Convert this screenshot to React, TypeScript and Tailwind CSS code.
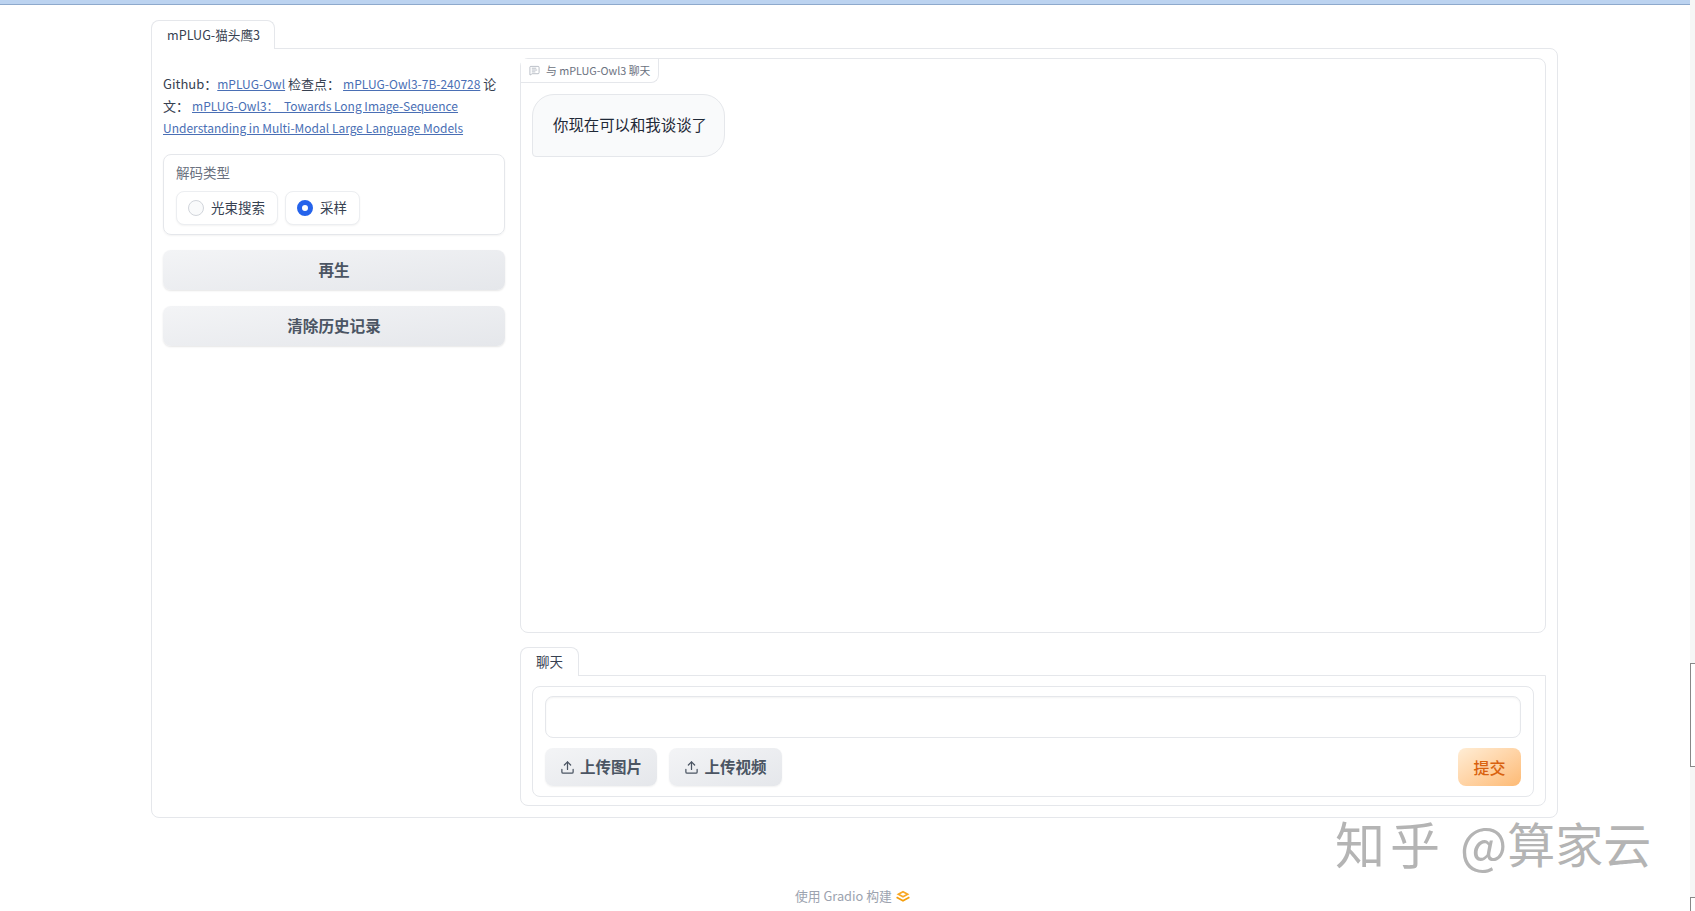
import { MessageSquareText, Upload } from "lucide-react"

const font = "font-['Noto_Sans_CJK_SC','Noto_Sans',sans-serif]"

function GradioLogo() {
  return (
    <svg viewBox="0 0 24 20" className="w-[14px] h-[12px]" fill="none">
      <path d="M12 1 L23 7 L12 13 L1 7 Z" fill="#f9a825" />
      <path d="M1 12 L12 18 L23 12" stroke="#f59e0b" strokeWidth="3" />
      <path d="M7 7 L12 4.5 L17 7 L12 9.5 Z" fill="#fff" />
    </svg>
  )
}

function Radio({ label, checked }: { label: string; checked?: boolean }) {
  return (
    <div className={`flex items-center gap-[7px] h-[34px] pl-[11px] rounded-lg border border-[#eceef1] bg-white shadow-[0_1px_2px_rgba(0,0,0,0.05)] ${checked ? "w-[75px]" : "w-[102px]"}`}>
      {checked ? (
        <span className="shrink-0 w-4 h-4 rounded-full border-[5px] border-[#2563eb] bg-white" />
      ) : (
        <span className="shrink-0 w-4 h-4 rounded-full border border-[#d1d5db] bg-[#f9fafb]" />
      )}
      <span className="whitespace-nowrap text-[13.5px] leading-none text-[#374151]">{label}</span>
    </div>
  )
}

function UploadButton({ label, width }: { label: string; width: string }) {
  return (
    <button className={`flex items-center justify-center gap-[5px] h-[38px] rounded-lg bg-gradient-to-br from-[#f3f4f6] to-[#e5e7eb] shadow-[0_1px_2px_rgba(0,0,0,0.06)] text-[15.5px] font-semibold text-[#4b5563] ${width}`}>
      <Upload className="w-[15px] h-[15px]" strokeWidth={2} />
      {label}
    </button>
  )
}

export default function App() {
  return (
    <div className={`relative h-[911px] w-[1695px] overflow-hidden bg-white ${font}`}>
      {/* browser edge */}
      <div className="h-[5px] bg-[#bcd3f0] border-b border-[#8ea9cc]" />

      <main className="ml-[151px] mt-[15px] w-[1407px]">
        <div className="flex">
          <div className="flex items-center h-[29px] w-[124px] pl-[15px] -mb-px rounded-t-lg border border-b-0 border-[#e5e7eb] bg-white text-[12.6px] text-[#374151] relative z-10">
            mPLUG-猫头鹰3
          </div>
        </div>

        <div className="flex gap-[15px] h-[770px] px-[11px] pt-[9px] border border-[#e5e7eb] rounded-b-lg rounded-tr-lg">
          {/* left column */}
          <div className="w-[342px] shrink-0 flex flex-col">
            <p className="text-[13px] leading-[22px] text-[#374151] mt-[15px] mb-[15px]">
              Github：
              <a className="text-[12px] underline text-[#4a6fb5]">mPLUG-Owl</a> 检查点：
              <a className="ml-[3px] text-[12px] underline text-[#4a6fb5]">mPLUG-Owl3-7B-240728</a> 论文：
              <a className="ml-[3px] text-[12px] underline text-[#4a6fb5]">mPLUG-Owl3：&nbsp;&nbsp;Towards Long Image-Sequence Understanding in Multi-Modal Large Language Models</a>
            </p>

            <div className="h-[81px] rounded-lg border border-[#e5e7eb] shadow-[0_1px_2px_rgba(0,0,0,0.05)] px-3 pt-[8px]">
              <div className="text-[13.5px] leading-[18px] text-[#6b7280] mb-[10px]">解码类型</div>
              <div className="flex gap-[7px]">
                <Radio label="光束搜索" />
                <Radio label="采样" checked />
              </div>
            </div>

            <button className="mt-[15px] h-[40px] rounded-lg bg-gradient-to-br from-[#f3f4f6] to-[#e5e7eb] shadow-[0_1px_2px_rgba(0,0,0,0.1)] text-[15.6px] font-semibold text-[#4b5563]">
              再生
            </button>
            <button className="mt-[16px] h-[40px] rounded-lg bg-gradient-to-br from-[#f3f4f6] to-[#e5e7eb] shadow-[0_1px_2px_rgba(0,0,0,0.1)] text-[15.6px] font-semibold text-[#4b5563]">
              清除历史记录
            </button>
          </div>

          {/* right column */}
          <div className="flex-1 flex flex-col">
            <div className="relative h-[575px] rounded-lg border border-[#e5e7eb] px-[11px] pt-[35px]">
              <div className="absolute left-0 top-0 flex items-center gap-[6px] h-[24px] w-[138px] pl-[8px] rounded-br-lg border-r border-b border-[#e5e7eb] bg-white text-[10.8px] text-[#6b7280]">
                <MessageSquareText className="w-[11px] h-[11px] text-[#9ca3af]" strokeWidth={1.5} />
                与 mPLUG-Owl3 聊天
              </div>
              <div className="flex items-center w-[193px] h-[63px] pl-[20px] pb-[2px] rounded-[22px] rounded-bl-[4px] border border-[#e5e7eb] bg-[#f9fafb] text-[15.4px] text-[#1f2937]">
                你现在可以和我谈谈了
              </div>
            </div>

            <div className="mt-[14px] flex">
              <div className="flex items-center h-[29px] w-[59px] pl-[15px] pb-[2px] -mb-px rounded-t-lg border border-b-0 border-[#e5e7eb] bg-white text-[13.5px] text-[#374151] relative z-10">
                聊天
              </div>
            </div>
            <div className="h-[131px] px-[11px] pt-[10px] border border-[#e5e7eb] rounded-b-lg">
              <div className="h-[111px] rounded-lg border border-[#e5e7eb] px-3 pt-[9px]">
                <div className="h-[42px] rounded-lg border border-[#e5e7eb] shadow-[inset_0_1px_2px_rgba(0,0,0,0.05)]" />
                <div className="flex gap-3 mt-[10px]">
                  <UploadButton label="上传图片" width="w-[112px]" />
                  <UploadButton label="上传视频" width="w-[113px]" />
                  <button className="ml-auto w-[63px] h-[38px] rounded-lg bg-gradient-to-br from-[#ffedd5] to-[#fdba74] text-[16px] font-medium text-[#d9620f]">
                    提交
                  </button>
                </div>
              </div>
            </div>
          </div>
        </div>
      </main>

      <footer className="mt-[69px] flex items-center gap-[4px] pl-[795px] text-[12.8px] leading-[18px] text-[#9ca3af]">
        使用 Gradio 构建
        <GradioLogo />
      </footer>

      {/* watermark */}
      <div className="absolute left-[1335px] top-[812px] flex items-center whitespace-nowrap text-[50px] leading-[60px] text-[#b4b4b4]">
        <span className="tracking-[5px]">知乎</span>
        <span className="ml-[15px]">@</span>
        <span className="text-[48px]">算家云</span>
      </div>

      {/* page scrollbar edge */}
      <div className="absolute right-0 top-0 bottom-0 w-[5px] bg-[#f6f6f6]">
        <div className="absolute left-0 top-[663px] h-[104px] w-full border border-r-0 border-[#888888] bg-white" />
        <div className="absolute left-0 top-[897px] h-[20px] w-full border border-r-0 border-[#888888] bg-white" />
      </div>
    </div>
  )
}
